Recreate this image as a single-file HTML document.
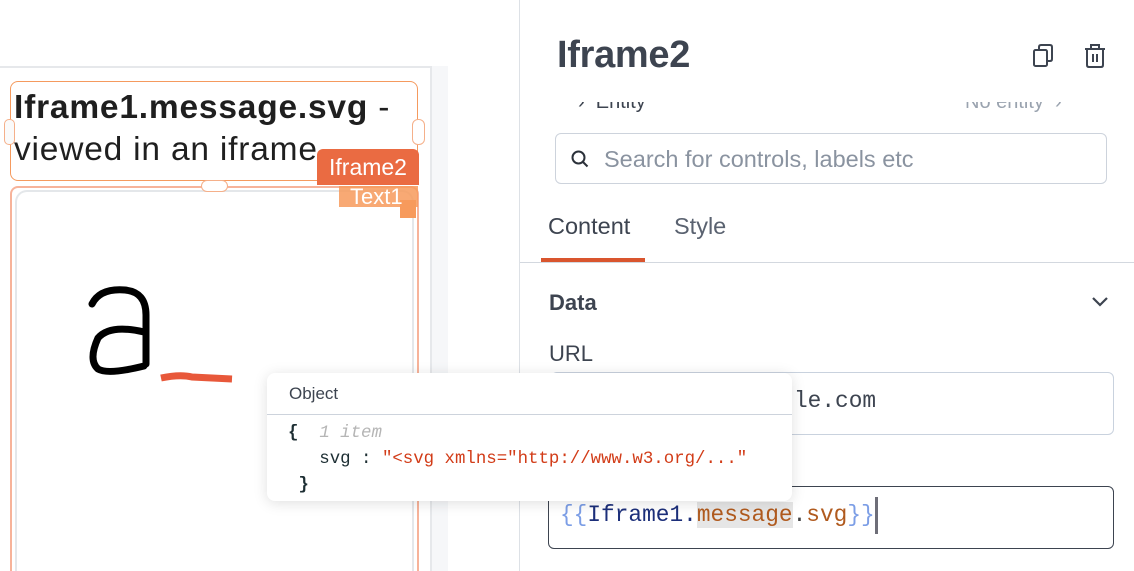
<!DOCTYPE html>
<html><head><meta charset="utf-8"><style>
*{box-sizing:border-box;margin:0;padding:0}
html,body{width:1134px;height:571px;overflow:hidden}
body{background:#fff;position:relative;font-family:"Liberation Sans",sans-serif}
.a{position:absolute}
.mono{font-family:"Liberation Mono",monospace}
</style></head><body>
<div class="a" style="left:0;top:66px;width:432px;height:505px;border-top:2px solid #e6e8eb;border-right:2px solid #e6e8eb;background:#fff"></div>
<div class="a" style="left:432px;top:66px;width:16px;height:505px;background:#f6f7f9"></div>
<div class="a" style="left:10px;top:81px;width:408px;height:100px;border:1px solid #f59a5e;border-radius:8px"></div>
<div class="a" style="left:4px;top:119px;width:11px;height:26px;border:1px solid #f5b08a;border-radius:5px;background:#fafafa"></div>
<div class="a" style="left:412px;top:119px;width:13px;height:26px;border:1px solid #f5b08a;border-radius:6px;background:#fff"></div>
<div class="a" style="left:14px;top:87px;font-size:33.5px;line-height:42px;color:#1f1f1f;white-space:nowrap;letter-spacing:0.8px"><b>Iframe1.message.svg</b> -<br>viewed in an iframe</div>
<div class="a" style="left:10px;top:186px;width:409px;height:385px;border:2px solid #f7b39a;border-bottom:none;border-radius:8px 8px 0 0"></div>
<div class="a" style="left:15px;top:190px;width:399px;height:381px;border:2px solid #e4e7ea;border-bottom:none;border-radius:12px 12px 0 0"></div>
<div class="a" style="left:201px;top:180px;width:27px;height:12px;border:1px solid #f5b08a;border-radius:6px;background:#fff"></div>
<div class="a" style="left:317px;top:149px;width:102px;height:36px;background:#ea6b42;border-radius:6px 6px 0 0;color:#fff;font-size:23px;line-height:36px;text-align:center">Iframe2</div>
<div class="a" style="left:339px;top:186px;width:79px;height:21px;background:#f79a5c;opacity:.85"></div>
<div class="a" style="left:400px;top:200px;width:16px;height:18px;background:#f79a5c"></div>
<div class="a" style="left:350px;top:184px;font-size:22px;line-height:26px;color:#fff;height:23px;overflow:hidden">Text1</div>
<svg class="a" style="left:80px;top:280px" width="160" height="110" viewBox="0 0 160 110">
<path d="M12 24 Q20 8 45 10 Q66 12 66 35 L66 84 M64 52 Q30 44 18 58 Q8 80 18 89 Q28 95 64 86" fill="none" stroke="#000" stroke-width="7" stroke-linecap="round" stroke-linejoin="round"/>
<path d="M81 98 Q100 94 112 97 L152 99" fill="none" stroke="#e8583a" stroke-width="7"/>
</svg>
<!-- right panel -->
<div class="a" style="left:519px;top:0;width:1px;height:571px;background:#dde1e6"></div>
<div class="a" style="left:557px;top:34px;font-size:38px;color:#3d4450;font-weight:bold;letter-spacing:-0.3px">Iframe2</div>
<svg class="a" style="left:1031px;top:43px" width="24" height="26" viewBox="0 0 24 26" fill="none" stroke="#3d4450" stroke-width="2"><rect x="3" y="7" width="13" height="16" rx="1.5"/><path d="M8 7V4Q8 2 10 2h9q2 0 2 2v12q0 2-2 2h-3"/></svg>
<svg class="a" style="left:1083px;top:43px" width="24" height="26" viewBox="0 0 24 26" fill="none" stroke="#3d4450" stroke-width="2"><path d="M2 6h20M8 6V2h8v4M4 6v16q0 2 2 2h12q2 0 2-2V6M10 11v8M14 11v8"/></svg>
<div class="a" style="left:578px;top:102px;width:540px;height:16px;overflow:hidden">
<div class="a" style="left:0;top:-11px;font-size:20px;color:#3d4450">› &nbsp;Entity</div>
<div class="a" style="left:387px;top:-11px;font-size:20px;color:#9aa3af">No entity &nbsp;›</div>
</div>
<div class="a" style="left:555px;top:133px;width:552px;height:51px;border:1px solid #cdd3dc;border-radius:6px"></div>
<svg class="a" style="left:570px;top:149px" width="20" height="20" viewBox="0 0 20 20" fill="none" stroke="#2b313a" stroke-width="2"><circle cx="8.5" cy="8.5" r="6"/><path d="M13 13l4.5 4.5"/></svg>
<div class="a" style="left:604px;top:146px;font-size:23.5px;color:#8a93a0">Search for controls, labels etc</div>
<div class="a" style="left:548px;top:213px;font-size:23.5px;color:#3d4450">Content</div>
<div class="a" style="left:674px;top:213px;font-size:23.5px;color:#5a6270">Style</div>
<div class="a" style="left:520px;top:262px;width:614px;height:1px;background:#d3d8df"></div>
<div class="a" style="left:541px;top:258px;width:104px;height:4px;background:#d9552e"></div>
<div class="a" style="left:549px;top:290px;font-size:22px;color:#3d4450;font-weight:bold">Data</div>
<svg class="a" style="left:1091px;top:296px" width="18" height="12" viewBox="0 0 18 12" fill="none" stroke="#3d4450" stroke-width="2.2"><path d="M2 2l7 7 7-7"/></svg>
<div class="a" style="left:549px;top:341px;font-size:22px;color:#3d4450">URL</div>
<div class="a" style="left:551px;top:372px;width:563px;height:63px;border:1px solid #c9d2de;border-radius:6px"></div>
<div class="a mono" style="left:794px;top:388px;font-size:22.8px;color:#3d4450">le.com</div>
<div class="a" style="left:548px;top:486px;width:566px;height:63px;border:1px solid #3d4450;border-radius:6px"></div>
<div class="a mono" style="left:560px;top:500px;font-size:22.8px;line-height:30px;white-space:pre"><span style="color:#7c9ee6">{{</span><span style="color:#1c2f7a">Iframe1.</span><span style="color:#b05a1e;background:#e6e6e6">message</span><span style="color:#444">.</span><span style="color:#b05a1e">svg</span><span style="color:#7c9ee6">}}</span></div>
<div class="a" style="left:875px;top:497px;width:3px;height:37px;background:#6e6e78"></div>
<!-- popup -->
<div class="a" style="left:267px;top:373px;width:525px;height:128px;background:#fff;border-radius:8px;box-shadow:0 2px 14px rgba(0,0,0,.13)">
<div style="height:42px;border-bottom:1px solid #cdd3dc;padding:11px 0 0 22px;font-size:17px;color:#3d4450">Object</div>
<div class="mono" style="position:absolute;left:21px;top:48px;font-size:17.4px;line-height:26px;color:#1d2e33;white-space:pre"><b>{</b>  <i style="color:#b5b5b5">1 item</i>
   svg : <span style="color:#d23c18">"&lt;svg xmlns="http://www.w3.org/..."</span>
 <b>}</b></div>
</div>
</body></html>
